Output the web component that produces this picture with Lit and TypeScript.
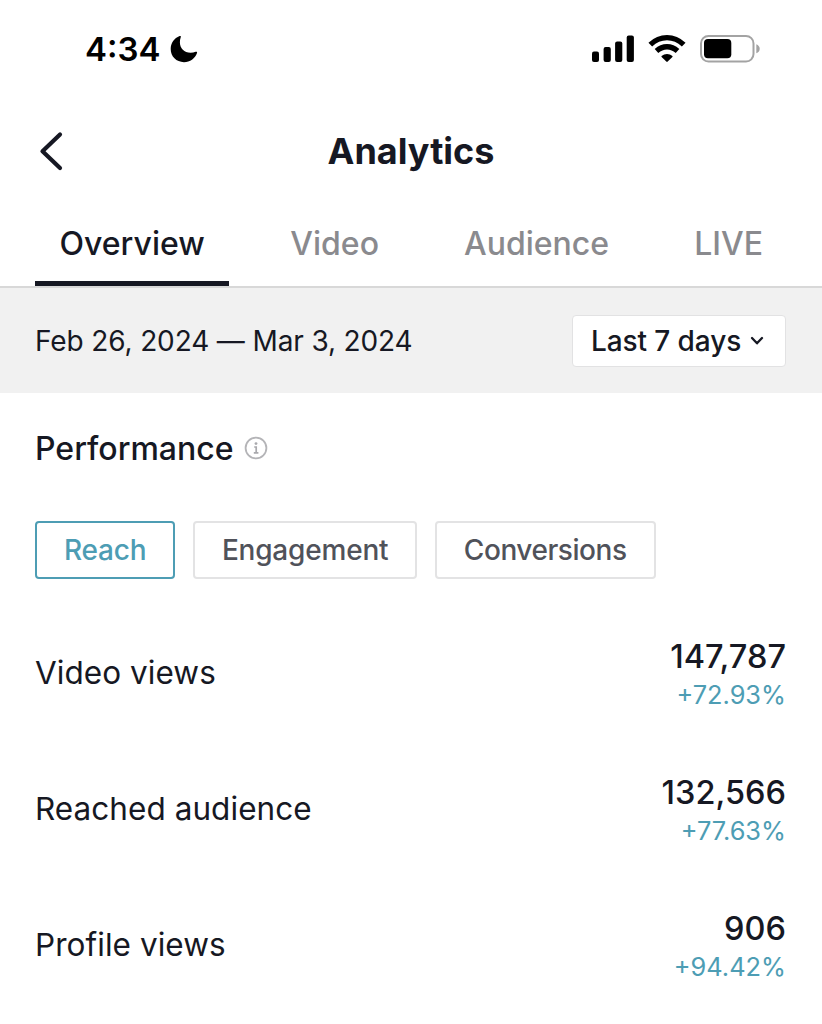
import { LitElement, html, css, svg } from "lit";
import { customElement, state } from "lit/decorators.js";
import { classMap } from "lit/directives/class-map.js";

interface Metric {
  label: string;
  value: string;
  change: string;
}

const TABS = ["Overview", "Video", "Audience", "LIVE"];
const GROUPS = ["Reach", "Engagement", "Conversions"];
const METRICS: Metric[] = [
  { label: "Video views", value: "147,787", change: "+72.93%" },
  { label: "Reached audience", value: "132,566", change: "+77.63%" },
  { label: "Profile views", value: "906", change: "+94.42%" },
];

@customElement("status-bar")
class StatusBar extends LitElement {
  static styles = css`
    :host {
      display: flex;
      align-items: center;
      justify-content: space-between;
      height: 97px;
      padding: 0 62px 0 85px;
      color: #000;
    }
    .time {
      display: flex;
      align-items: center;
      gap: 10px;
      font-size: 33px;
      font-weight: 600;
      line-height: 40px;
    }
    svg {
      display: block;
    }
  `;

  render() {
    return html`
      <div class="time">
        <span>4:34</span>
        <svg width="28" height="28" viewBox="0 0 28 28">
          <path
            d="M9.6 1.1C10.4.7 11.1 1.2 10.8 2.1C10.1 4 9.900 5.700 9.900 7.300C9.900 13.600 14.200 17.700 20.600 17.700C22.400 17.700 24.200 17.400 25.600 16.800C26.600 16.400 27.400 17 27 18C25.100 23.600 20 27.200 14 27.200C6.300 27.200 .700 21.600 .700 14.100C.700 8.300 4.300 3.100 9.600 1.100Z"
          />
        </svg>
      </div>
      <svg width="170" height="30" viewBox="0 0 170 30">
        <rect x="2" y="17.500" width="7" height="10.500" rx="2" />
        <rect x="13.600" y="13" width="7.200" height="15" rx="2" />
        <rect x="25.100" y="7.500" width="7.200" height="20.500" rx="2" />
        <rect x="36.700" y="1.500" width="7.200" height="26.500" rx="2" />
        <g fill="none" stroke="#000" stroke-width="5.300">
          <path d="M60.300 10.700C70 1.300 84 1.300 93.700 10.700" />
          <path d="M66.500 17C72.700 11.300 81.300 11.300 87.500 17" />
        </g>
        <path
          d="M71.600 22C74.700 19.300 79.300 19.300 82.400 22Q82.900 22.500 82.400 23L77.700 27.600Q77 28.200 76.300 27.600L71.600 23Q71.100 22.500 71.600 22Z"
        />
        <rect
          x="111"
          y="1.900"
          width="52.500"
          height="25.700"
          rx="7.500"
          fill="none"
          stroke="#a3a3a3"
          stroke-width="2"
        />
        <rect x="114" y="5" width="27.300" height="19.300" rx="4" />
        <path d="M166.300 10.300Q169.700 11.800 169.700 14.800Q169.700 17.800 166.300 19.300Z" fill="#a3a3a3" />
      </svg>
    `;
  }
}

@customElement("metric-row")
class MetricRow extends LitElement {
  static properties = { metric: { attribute: false } };
  declare metric: Metric;

  static styles = css`
    :host {
      display: flex;
      align-items: center;
      justify-content: space-between;
      height: 76px;
    }
    .label {
      font-size: 31.5px;
      line-height: 40px;
      padding-bottom: 2px;
      letter-spacing: 0.05px;
    }
    .numbers {
      padding-top: 3px;
      text-align: right;
    }
    .value {
      font-size: 32.5px;
      font-weight: 500;
      line-height: 38px;
    }
    .change {
      font-size: 25.4px;
      line-height: 37px;
      color: #4d9db4;
    }
  `;

  render() {
    return html`
      <div class="label">${this.metric.label}</div>
      <div class="numbers">
        <div class="value">${this.metric.value}</div>
        <div class="change">${this.metric.change}</div>
      </div>
    `;
  }
}

@customElement("app-root")
class AppRoot extends LitElement {
  @state() private tab = TABS[0];
  @state() private group = GROUPS[0];

  static styles = css`
    :host {
      display: block;
      box-sizing: border-box;
      height: 1024px;
      overflow: hidden;
      background: #fff;
      color: #161823;
      font-family: Inter, "Liberation Sans", sans-serif;
    }
    button {
      box-sizing: border-box;
      margin: 0;
      border: 0;
      padding: 0;
      background: none;
      color: inherit;
      font: inherit;
      letter-spacing: inherit;
    }
    svg {
      display: block;
    }
    .header {
      display: grid;
      grid-template-columns: 100px 1fr 100px;
      align-items: center;
      height: 108px;
    }
    .back {
      padding-left: 38px;
    }
    .title {
      margin: 0;
      text-align: center;
      font-size: 36px;
      font-weight: 700;
      line-height: 44px;
    }
    .tabs {
      display: flex;
      justify-content: space-between;
      height: 81px;
      padding: 0 35px;
      border-bottom: 2px solid #d8d8d8;
    }
    .tab {
      height: 81px;
      padding: 2px 24px 0;
      border-bottom: 5px solid transparent;
      color: #8a8a8e;
      font-size: 32px;
      font-weight: 500;
      line-height: 72px;
    }
    .tab.active {
      padding: 2px 24.500px 0;
      border-color: #161823;
      color: #161823;
    }
    .range {
      display: flex;
      align-items: center;
      justify-content: space-between;
      height: 105px;
      padding: 0 36px 0 35px;
      background: #f1f1f1;
      font-size: 28px;
      line-height: 36px;
    }
    .range .period {
      letter-spacing: -0.13px;
    }
    .select {
      display: flex;
      align-items: center;
      gap: 8px;
      width: 214px;
      height: 52px;
      border: 1.500px solid #e2e2e3;
      border-radius: 4px;
      padding-left: 18px;
      background: #fff;
      font-weight: 500;
      letter-spacing: -0.1px;
    }
    .content {
      padding: 35px 36px 0 35px;
    }
    .heading {
      display: flex;
      align-items: center;
      gap: 10px;
      height: 40px;
    }
    h2 {
      margin: 0;
      font-size: 32px;
      font-weight: 500;
    }
    .groups {
      display: flex;
      gap: 17.500px;
      margin: 53px 0 57px;
    }
    .group {
      height: 58px;
      padding: 0 27px;
      border: 2px solid #e3e3e4;
      border-radius: 4px;
      color: #50525a;
      font-size: 28px;
      font-weight: 500;
      letter-spacing: -0.2px;
    }
    .group:last-child {
      letter-spacing: -0.45px;
    }
    .group.active {
      border-color: #4d9db4;
      color: #4d9db4;
    }
    .metrics {
      display: flex;
      flex-direction: column;
      gap: 60px;
    }
  `;

  private chevron = svg`<path d="M22 4.500L4.500 21.200L22 38" fill="none" stroke="#161823" stroke-width="4.200" stroke-linecap="round" stroke-linejoin="round" />`;

  render() {
    return html`
      <status-bar></status-bar>
      <header class="header">
        <button class="back" aria-label="Back">
          <svg width="26" height="42" viewBox="0 0 26 42">${this.chevron}</svg>
        </button>
        <h1 class="title">Analytics</h1>
      </header>
      <nav class="tabs">
        ${TABS.map(
          (name) => html`<button
            class=${classMap({ tab: true, active: name === this.tab })}
            @click=${() => (this.tab = name)}
          >${name}</button>`
        )}
      </nav>
      <section class="range">
        <span class="period">Feb 26, 2024 — Mar 3, 2024</span>
        <button class="select">
          <span>Last 7 days</span>
          <svg width="16" height="12" viewBox="0 0 16 12">
            <path d="M3 3L8 8.300L13 3" fill="none" stroke="#161823" stroke-width="2.300" stroke-linecap="round" stroke-linejoin="round" />
          </svg>
        </button>
      </section>
      <main class="content">
        <div class="heading">
          <h2>Performance</h2>
          <svg width="24" height="24" viewBox="0 0 24 24">
            <circle cx="12" cy="12" r="10.400" fill="none" stroke="#b4b4b7" stroke-width="1.800" />
            <circle cx="12" cy="7.600" r="1.400" fill="#a9a9ad" />
            <path d="M10.200 11H12.200V16.600M9.800 16.800H14.400" fill="none" stroke="#a9a9ad" stroke-width="1.700" />
          </svg>
        </div>
        <div class="groups">
          ${GROUPS.map(
            (name) => html`<button
              class=${classMap({ group: true, active: name === this.group })}
              @click=${() => (this.group = name)}
            >${name}</button>`
          )}
        </div>
        <div class="metrics">
          ${METRICS.map((m) => html`<metric-row .metric=${m}></metric-row>`)}
        </div>
      </main>
    `;
  }
}
